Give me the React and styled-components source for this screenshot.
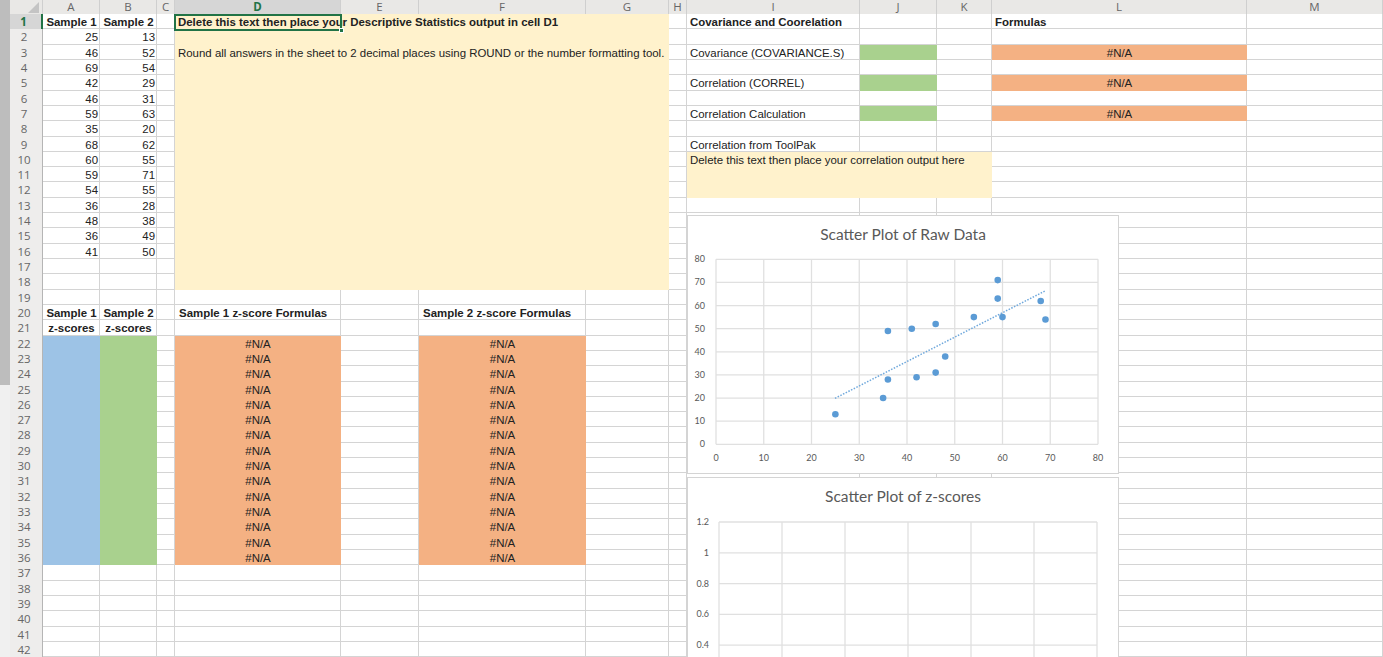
import React from 'react';
import styled, { createGlobalStyle } from 'styled-components';

const GlobalStyle = createGlobalStyle`
  html, body {
    margin: 0;
    height: 100%;
    overflow: hidden;
    background: #fff;
  }
`;

const COLUMNS = [
  ['A', 57], ['B', 57], ['C', 18], ['D', 166], ['E', 78], ['F', 167], ['G', 83],
  ['H', 18], ['I', 173], ['J', 77], ['K', 55], ['L', 255], ['M', 136],
];
const ROW_COUNT = 42;
const ROW_HEIGHT = 15.32;

const SAMPLES = [
  [25, 13], [46, 52], [69, 54], [42, 29], [46, 31], [59, 63], [35, 20], [68, 62],
  [60, 55], [59, 71], [54, 55], [36, 28], [48, 38], [36, 49], [41, 50],
];

const FILLS = { blue: '#9dc3e6', green: '#a9d18e', orange: '#f4b183', yellow: '#fff2cc' };

const Page = styled.div`
  display: flex;
  width: 1383px;
  height: 657px;
  overflow: hidden;
`;

const ScrollStrip = styled.div`
  flex: 0 0 10px;
  background: linear-gradient(#bdbdbd 0 385px, #f0f0f0 385px);
`;

const Sheet = styled.div`
  position: relative;
  display: grid;
  grid-template-columns: 33px ${COLUMNS.map((c) => c[1] + 'px').join(' ')};
  grid-template-rows: 14px repeat(${ROW_COUNT}, ${ROW_HEIGHT}px);
  font-family: "Liberation Sans", Arial, sans-serif;
  font-size: 11.45px;
  color: #222;
`;

const Corner = styled.div`
  background: #e9e8e6;
  border-right: 1px solid #cfcfcf;
  display: flex;
  justify-content: flex-end;
  align-items: flex-end;
  padding: 0 3px 1px 0;
  &::after {
    content: '';
    border-style: solid;
    border-width: 0 0 11px 11px;
    border-color: transparent transparent #c4c4c4 transparent;
  }
`;

const ColHeader = styled.div`
  background: ${(p) => (p.$active ? '#d6d6d6' : '#e9e8e6')};
  color: ${(p) => (p.$active ? '#217346' : '#666')};
  font-family: "Open Sans", sans-serif;
  font-weight: ${(p) => (p.$active ? 700 : 400)};
  font-size: 11.5px;
  line-height: 14px;
  text-align: center;
  border-right: 1px solid #cfcfcf;
  box-sizing: border-box;
  overflow: hidden;
`;

const RowHeader = styled.div`
  grid-column: 1;
  grid-row: ${(p) => p.$row + 1};
  background: ${(p) => (p.$active ? '#d6d6d6' : '#eeedec')};
  color: ${(p) => (p.$active ? '#217346' : '#666')};
  font-family: "Open Sans", sans-serif;
  font-weight: ${(p) => (p.$active ? 700 : 400)};
  font-size: 11.5px;
  line-height: 15px;
  text-align: center;
  padding-right: 4px;
  box-sizing: border-box;
  border-right: ${(p) => (p.$active ? '2px solid #217346' : '1px solid #b5b5b5')};
  overflow: hidden;
`;

const Cell = styled.div`
  grid-column: ${(p) => p.$col + 2} / span ${(p) => p.$colSpan || 1};
  grid-row: ${(p) => p.$row + 1} / span ${(p) => p.$rowSpan || 1};
  box-sizing: border-box;
  min-width: 0;
  padding: 1px ${(p) => (p.$align === 'right' ? '1px' : '2px')} 0 ${(p) => (p.$indent ? '4px' : '3px')};
  line-height: 15px;
  white-space: nowrap;
  text-align: ${(p) => p.$align || 'left'};
  font-weight: ${(p) => (p.$bold ? 700 : 400)};
  background: ${(p) => (p.$fill ? FILLS[p.$fill] : '#fff')};
  border-right: 1px solid ${(p) => (p.$fill ? FILLS[p.$fill] : '#d4d4d4')};
  border-bottom: 1px solid ${(p) => (p.$fill ? FILLS[p.$fill] : '#d4d4d4')};
`;

const NoteBlock = styled.div`
  grid-column: 5 / span 4;
  grid-row: 2 / span 18;
  background: ${FILLS.yellow};
  padding-top: 1px;
  line-height: ${ROW_HEIGHT}px;
  white-space: nowrap;
`;

const SelectedLine = styled.div`
  position: relative;
  width: 166px;
  height: ${ROW_HEIGHT}px;
  padding-left: 3px;
  box-sizing: border-box;
  font-weight: 700;
  &::before {
    content: '';
    position: absolute;
    inset: -1px -1px -1px -1px;
    border: 2px solid #217346;
  }
  &::after {
    content: '';
    position: absolute;
    right: -3px;
    bottom: -3px;
    width: 5px;
    height: 5px;
    background: #217346;
    border: 1px solid #fff;
    box-sizing: border-box;
  }
`;

const NoteLine = styled.div`
  height: ${ROW_HEIGHT}px;
  padding-left: 3px;
`;

const ChartFrame = styled.div`
  position: absolute;
  left: ${(p) => p.$left}px;
  top: ${(p) => p.$top}px;
  width: 432px;
  height: ${(p) => p.$height}px;
  background: #fff;
  border: 1px solid #d4d4d4;
  box-sizing: border-box;
  font-family: Lato, sans-serif;
`;

const ChartTitle = styled.div`
  text-align: center;
  font-size: 15.5px;
  color: #595959;
  padding-top: 8px;
  line-height: 20px;
`;

const ChartSvg = styled.svg`
  position: absolute;
  left: 0;
  top: 0;
  font-family: Lato, sans-serif;
  font-size: 9px;
  fill: #595959;
`;

const GRID_LINE = { stroke: '#e0e0e0', strokeWidth: 1.3 };

function RawDataChart() {
  // plot area in frame coordinates
  const left = 28;
  const right = 410;
  const top = 43.3;
  const bottom = 228.3;
  const sx = (v) => left + (v / 80) * (right - left);
  const sy = (v) => bottom - (v / 80) * (bottom - top);
  const ticks = [0, 10, 20, 30, 40, 50, 60, 70, 80];

  return (
    <ChartFrame $left={677} $top={215} $height={259}>
      <ChartTitle>Scatter Plot of Raw Data</ChartTitle>
      <ChartSvg width="430" height="257">
        {ticks.map((t) => (
          <g key={t}>
            <line x1={sx(t)} x2={sx(t)} y1={top} y2={bottom} {...GRID_LINE} />
            <line x1={left} x2={right} y1={sy(t)} y2={sy(t)} {...GRID_LINE} />
            <text x={sx(t)} y={245} textAnchor="middle">{t}</text>
            <text x={17} y={sy(t) + 3} textAnchor="end">{t}</text>
          </g>
        ))}
        <line x1={147} y1={182.3} x2={357} y2={75} stroke="#6fa8dc" strokeWidth="1.5" strokeDasharray="1.5 1.5" />
        {SAMPLES.map(([x, y], i) => (
          <circle key={i} cx={sx(x)} cy={sy(y)} r="3.3" fill="#5b9bd5" />
        ))}
      </ChartSvg>
    </ChartFrame>
  );
}

function ZScoreChart() {
  const left = 31;
  const top = 44;
  const labels = ['1.2', '1', '0.8', '0.6', '0.4'];
  const stepY = 30.8;
  const stepX = 63;

  return (
    <ChartFrame $left={677} $top={477} $height={190}>
      <ChartTitle>Scatter Plot of z-scores</ChartTitle>
      <ChartSvg width="430" height="188">
        {[0, 1, 2, 3, 4, 5, 6].map((i) => (
          <line key={i} x1={left + i * stepX} x2={left + i * stepX} y1={top} y2={188} {...GRID_LINE} />
        ))}
        {labels.map((label, i) => (
          <g key={label}>
            <line x1={left} x2={left + 6 * stepX} y1={top + i * stepY} y2={top + i * stepY} {...GRID_LINE} />
            <text x={21} y={top + i * stepY + 3} textAnchor="end">{label}</text>
          </g>
        ))}
      </ChartSvg>
    </ChartFrame>
  );
}

// content and fill of the cells that are not plain empty ones, keyed "col,row"
function buildCells() {
  const cells = {};
  const put = (col, row, props) => {
    cells[`${col},${row}`] = props;
  };

  put(0, 1, { text: 'Sample 1', bold: true, align: 'center' });
  put(1, 1, { text: 'Sample 2', bold: true, align: 'center' });
  SAMPLES.forEach(([a, b], i) => {
    put(0, i + 2, { text: a, align: 'right' });
    put(1, i + 2, { text: b, align: 'right' });
  });

  put(0, 20, { text: 'Sample 1', bold: true, align: 'center' });
  put(1, 20, { text: 'Sample 2', bold: true, align: 'center' });
  put(0, 21, { text: 'z-scores', bold: true, align: 'center' });
  put(1, 21, { text: 'z-scores', bold: true, align: 'center' });
  put(3, 20, { text: 'Sample 1 z-score Formulas', bold: true, indent: true });
  put(5, 20, { text: 'Sample 2 z-score Formulas', bold: true, indent: true });

  for (let row = 22; row <= 36; row++) {
    put(0, row, { fill: 'blue' });
    put(1, row, { fill: 'green' });
    put(3, row, { text: '#N/A', fill: 'orange', align: 'center' });
    put(5, row, { text: '#N/A', fill: 'orange', align: 'center' });
  }

  put(8, 1, { text: 'Covariance and Coorelation', bold: true });
  put(11, 1, { text: 'Formulas', bold: true });
  [[3, 'Covariance (COVARIANCE.S)'], [5, 'Correlation (CORREL)'], [7, 'Correlation Calculation']].forEach(([row, text]) => {
    put(8, row, { text });
    put(9, row, { fill: 'green' });
    put(11, row, { text: '#N/A', fill: 'orange', align: 'center' });
  });
  put(8, 9, { text: 'Correlation from ToolPak' });
  return cells;
}

const isCoveredByMerge = (col, row) =>
  (col >= 3 && col <= 6 && row <= 18) || (col >= 8 && col <= 10 && row >= 10 && row <= 12);

export default function App() {
  const cells = buildCells();
  const rows = Array.from({ length: ROW_COUNT }, (_, i) => i + 1);

  return (
    <Page>
      <GlobalStyle />
      <ScrollStrip />
      <Sheet>
        <Corner />
        {COLUMNS.map(([name]) => (
          <ColHeader key={name} $active={name === 'D'}>{name}</ColHeader>
        ))}
        {rows.map((row) => (
          <RowHeader key={row} $row={row} $active={row === 1}>{row}</RowHeader>
        ))}
        {rows.flatMap((row) =>
          COLUMNS.map((_, col) => {
            if (isCoveredByMerge(col, row)) return null;
            const cell = cells[`${col},${row}`] || {};
            return (
              <Cell
                key={`${col},${row}`}
                $col={col}
                $row={row}
                $fill={cell.fill}
                $bold={cell.bold}
                $align={cell.align}
                $indent={cell.indent}
              >
                {cell.text}
              </Cell>
            );
          })
        )}
        <NoteBlock>
          <SelectedLine>Delete this text then place your Descriptive Statistics output in cell D1</SelectedLine>
          <NoteLine />
          <NoteLine>Round all answers in the sheet to 2 decimal places using ROUND or the number formatting tool.</NoteLine>
        </NoteBlock>
        <Cell $col={8} $row={10} $colSpan={3} $rowSpan={3} $fill="yellow">
          Delete this text then place your correlation output here
        </Cell>
        <RawDataChart />
        <ZScoreChart />
      </Sheet>
    </Page>
  );
}
